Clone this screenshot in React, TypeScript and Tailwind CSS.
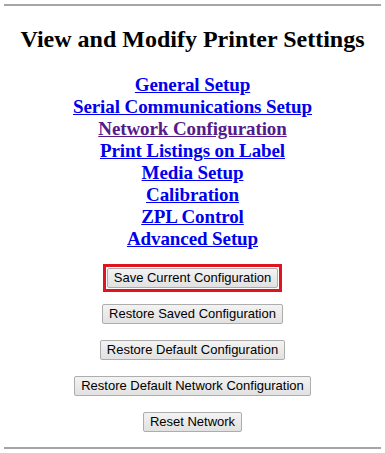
import React from "react";

const links = [
  { t: "General Setup", v: false },
  { t: "Serial Communications Setup", v: false },
  { t: "Network Configuration", v: true },
  { t: "Print Listings on Label", v: false },
  { t: "Media Setup", v: false },
  { t: "Calibration", v: false },
  { t: "ZPL Control", v: false },
  { t: "Advanced Setup", v: false },
];

function Btn({ label }: { label: string }) {
  return (
    <button className="h-[20px] px-[6px] border border-[#adadad] rounded-[2px] bg-gradient-to-b from-[#f3f3f3] to-[#e1e1e1] text-[13px] leading-[18px] text-black font-['Liberation_Sans',Arial,sans-serif]">
      {label}
    </button>
  );
}

export default function App() {
  return (
    <div className="w-[385px] h-[453px] bg-white px-1 pt-1 font-['Liberation_Serif','Times_New_Roman',serif]">
      <div className="h-[2px] bg-[#a5a5a5]" />
      <h1 className="mt-[18px] text-center text-[24px] leading-[30px] font-bold text-black">
        View and Modify Printer Settings
      </h1>
      <div className="mt-[20px] flex flex-col items-center">
        {links.map((l) => (
          <a
            key={l.t}
            href="#"
            className={`text-[19px] leading-[22px] font-bold underline tracking-[-0.1px] ${l.v ? "text-[#551a8b]" : "text-[#0000ee]"}`}
          >
            {l.t}
          </a>
        ))}
      </div>
      <div className="mt-[18px] flex flex-col items-center gap-[16px]">
        <div className="relative flex">
          <Btn label="Save Current Configuration" />
          <span className="pointer-events-none absolute -inset-[4px] border-[3px] border-[#e0141e]" />
        </div>
        <Btn label="Restore Saved Configuration" />
        <Btn label="Restore Default Configuration" />
        <Btn label="Restore Default Network Configuration" />
        <Btn label="Reset Network" />
      </div>
      <div className="mt-[15px] h-[2px] bg-[#a5a5a5]" />
    </div>
  );
}
